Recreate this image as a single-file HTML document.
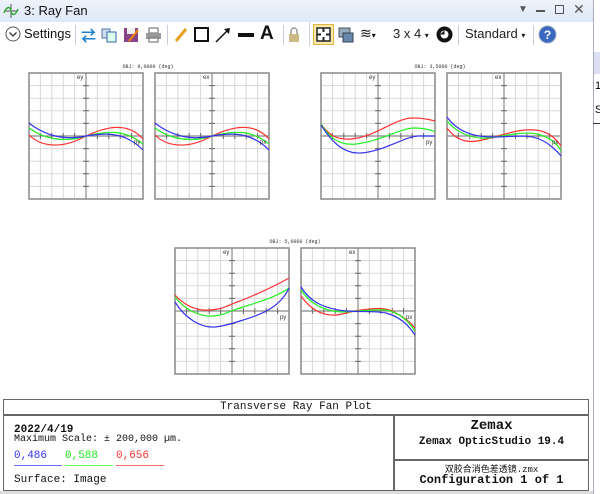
<!DOCTYPE html>
<html><head><meta charset="utf-8"><style>
*{margin:0;padding:0;box-sizing:border-box}
body{width:600px;height:494px;overflow:hidden;background:#fff;position:relative;font-family:"Liberation Sans","Noto Sans CJK SC",sans-serif}
.abs{position:absolute}
.mono{font-family:"Liberation Mono","Noto Sans CJK SC",monospace}
</style></head><body>
<!-- title bar -->
<div class="abs" style="left:0;top:0;width:593px;height:22px;background:linear-gradient(#eef3fb,#dde8f7);"></div>
<svg class="abs" style="left:3px;top:3px" width="16" height="16"><line x1="8" y1="1" x2="8" y2="15" stroke="#555"/><line x1="1" y1="8" x2="15" y2="8" stroke="#555"/><path d="M1,10 C4,3 7,3 8,8 C9,13 12,13 15,6" stroke="#3a3" fill="none" stroke-width="1.5"/></svg>
<div class="abs" style="left:24px;top:3px;font-size:13px;color:#111">3: Ray Fan</div>
<div class="abs" style="left:518px;top:4px;font-size:10px;color:#555">▼</div>
<div class="abs" style="left:536px;top:10px;width:9px;height:2px;background:#555"></div>
<div class="abs" style="left:555px;top:5px;width:9px;height:9px;border:1.5px solid #555"></div>
<div class="abs" style="left:573px;top:1px;font-size:14px;color:#555">✕</div>
<!-- right strip -->
<div class="abs" style="left:593px;top:0;width:7px;height:494px;background:#fff;border-left:1px solid #aab"></div>
<div class="abs" style="left:594px;top:52px;width:6px;height:22px;background:#dde0f5"></div>
<div class="abs" style="left:595px;top:80px;font-size:11px">1</div>
<div class="abs" style="left:595px;top:104px;font-size:11px">S</div>
<div class="abs" style="left:593px;top:123px;width:7px;height:1px;background:#333"></div>
<!-- toolbar -->
<div class="abs" style="left:0;top:22px;width:593px;height:26px;background:#fff"></div>
<svg class="abs" style="left:5px;top:26px" width="16" height="16"><circle cx="8" cy="8" r="7" fill="none" stroke="#555"/><path d="M4.5,6.5 L8,10 L11.5,6.5" stroke="#333" fill="none" stroke-width="1.3"/></svg>
<div class="abs" style="left:24px;top:26px;font-size:13px;color:#111">Settings</div>
<div class="abs" style="left:75px;top:25px;width:1px;height:20px;background:#ccd"></div>
<div class="abs" style="left:81px;top:25px;font-size:15px;color:#1a7fd0;font-weight:bold">⇄</div>
<svg class="abs" style="left:101px;top:27px" width="16" height="16"><rect x="1" y="2" width="8" height="9" fill="#cde" stroke="#57a"/><rect x="6" y="5" width="9" height="10" fill="#dfe" stroke="#36a"/></svg>
<svg class="abs" style="left:123px;top:27px" width="16" height="16"><rect x="1" y="1" width="14" height="14" fill="#848" /><rect x="4" y="1" width="8" height="6" fill="#eee"/><path d="M6,14 L15,3" stroke="#e80" stroke-width="2"/></svg>
<svg class="abs" style="left:145px;top:27px" width="17" height="16"><rect x="4" y="1" width="9" height="5" fill="#fff" stroke="#666"/><rect x="1" y="6" width="15" height="6" fill="#999"/><rect x="4" y="11" width="9" height="4" fill="#fff" stroke="#666"/></svg>
<div class="abs" style="left:167px;top:25px;width:1px;height:20px;background:#ccd"></div>
<svg class="abs" style="left:174px;top:27px" width="14" height="16"><path d="M2,14 L12,2" stroke="#e9a020" stroke-width="3"/></svg>
<div class="abs" style="left:194px;top:27px;width:15px;height:15px;border:2px solid #111"></div>
<svg class="abs" style="left:214px;top:26px" width="18" height="18"><path d="M2,16 L15,3" stroke="#111" stroke-width="1.5"/><path d="M10,3 L16,2 L15,8Z" fill="#111"/></svg>
<div class="abs" style="left:238px;top:33px;width:16px;height:4px;background:#111"></div>
<div class="abs" style="left:260px;top:23px;font-size:19px;font-weight:bold;color:#111">A</div>
<div class="abs" style="left:283px;top:25px;width:1px;height:20px;background:#ccd"></div>
<svg class="abs" style="left:288px;top:27px" width="12" height="16"><path d="M3,7 V4 A3,3 0 0 1 9,4 V7" stroke="#999" fill="none" stroke-width="1.5"/><rect x="1" y="7" width="10" height="8" fill="#cb8"/></svg>
<div class="abs" style="left:309px;top:22px;width:1px;height:24px;background:#ccd"></div>
<div class="abs" style="left:313px;top:24px;width:21px;height:21px;background:#fde9a8;border:1px solid #e2b340"></div>
<svg class="abs" style="left:316px;top:27px" width="15" height="15"><rect x="1" y="1" width="13" height="13" fill="#fff" stroke="#222" stroke-width="1.5"/><path d="M7.5,1V14M1,7.5H14" stroke="#222" stroke-width="2"/><rect x="5" y="5" width="5" height="5" fill="#fff"/></svg>
<svg class="abs" style="left:338px;top:27px" width="16" height="16"><rect x="1" y="1" width="11" height="9" fill="#9ab" stroke="#456"/><rect x="5" y="6" width="10" height="9" fill="#68a" stroke="#345"/></svg>
<div class="abs" style="left:360px;top:25px;font-size:14px;color:#111">≋<span style="font-size:8px">▾</span></div>
<div class="abs" style="left:393px;top:26px;font-size:13px;color:#222">3 x 4 <span style="font-size:8px">▾</span></div>
<svg class="abs" style="left:436px;top:26px" width="17" height="17"><circle cx="8.5" cy="8.5" r="8" fill="#111"/><circle cx="8.5" cy="8.5" r="4" fill="#fff"/><path d="M8.5,4.5 V8.5 H4" fill="#111"/></svg>
<div class="abs" style="left:458px;top:25px;width:1px;height:20px;background:#ccd"></div>
<div class="abs" style="left:465px;top:26px;font-size:13px;color:#222">Standard <span style="font-size:8px">▾</span></div>
<div class="abs" style="left:533px;top:25px;width:1px;height:20px;background:#ccd"></div>
<svg class="abs" style="left:538px;top:25px" width="19" height="19"><circle cx="9.5" cy="9.5" r="8.5" fill="#3a68c0" stroke="#9ab"/><text x="9.5" y="14" font-size="12" font-weight="bold" fill="#fff" text-anchor="middle" font-family="Liberation Sans">?</text></svg>

<!-- plots -->
<svg class="abs" style="left:0;top:48px" width="593" height="350" font-family="Liberation Sans" >
<defs>
<g id="grid">
<rect x="0" y="0" width="114" height="126" fill="#fff"/>
<g stroke="#d8d8d8" stroke-width="1">
<path d="M11.4,0V126M22.8,0V126M34.2,0V126M45.6,0V126M68.4,0V126M79.8,0V126M91.2,0V126M102.6,0V126"/>
<path d="M0,12.6H114M0,25.2H114M0,37.8H114M0,50.4H114M0,75.6H114M0,88.2H114M0,100.8H114M0,113.4H114"/>
</g>
<path d="M57,0V126M0,63H114" stroke="#888" stroke-width="1.2"/>
<g stroke="#666" stroke-width="1"><path d="M11.4,60V66M22.8,60V66M34.2,60V66M45.6,60V66M68.4,60V66M79.8,60V66M91.2,60V66M102.6,60V66M54,12.6H60M54,25.2H60M54,37.8H60M54,50.4H60M54,75.6H60M54,88.2H60M54,100.8H60M54,113.4H60"/></g>
<rect x="0" y="0" width="114" height="126" fill="none" stroke="#888" stroke-width="1.5"/>
</g>
</defs>
<g font-size="5" fill="#333" class="mono">
<text x="148" y="20" text-anchor="middle" font-family="Liberation Mono">OBJ: 0,0000 (deg)</text>
<text x="440" y="20" text-anchor="middle" font-family="Liberation Mono">OBJ: 3,5000 (deg)</text>
<text x="295" y="195" text-anchor="middle" font-family="Liberation Mono">OBJ: 5,0000 (deg)</text>
</g>
<g fill="none" stroke-width="1.2">
<!-- plot1 -->
<g transform="translate(29,25)"><use href="#grid"/>
<path d="M0,62 C10,72 30,78 57,63 C80,52 100,50 114,66" stroke="#f33"/>
<path d="M0,55 C15,66 35,70 57,63 C80,58 95,56 114,71" stroke="#2e2"/>
<path d="M0,50 C15,62 35,68 57,63 C75,60 95,58 114,77" stroke="#33e"/>
<text x="48" y="6" font-size="6" fill="#333" stroke="none">ey</text><text x="105" y="71" font-size="6" fill="#333" stroke="none">py</text></g>
<!-- plot2 -->
<g transform="translate(155,25)"><use href="#grid"/>
<path d="M0,62 C10,72 30,78 57,63 C80,52 100,50 114,66" stroke="#f33"/>
<path d="M0,55 C15,66 35,70 57,63 C80,58 95,56 114,71" stroke="#2e2"/>
<path d="M0,50 C15,62 35,68 57,63 C75,60 95,58 114,77" stroke="#33e"/>
<text x="48" y="6" font-size="6" fill="#333" stroke="none">ex</text><text x="105" y="71" font-size="6" fill="#333" stroke="none">px</text></g>
<!-- plot3 -->
<g transform="translate(321,25)"><use href="#grid"/>
<path d="M0,51 C8,62 15,67 30,66 C55,64 75,44 93,45 C103,45 110,47 114,48" stroke="#f33"/>
<path d="M0,51 C8,64 18,73 35,71 C60,68 80,55 93,55 C103,55 110,57 114,59" stroke="#2e2"/>
<path d="M0,52 C10,68 22,81 40,80 C65,78 85,62 100,63 C107,63 111,63 114,63" stroke="#33e"/>
<text x="48" y="6" font-size="6" fill="#333" stroke="none">ey</text><text x="105" y="71" font-size="6" fill="#333" stroke="none">py</text></g>
<!-- plot4 -->
<g transform="translate(447,25)"><use href="#grid"/>
<path d="M0,55 C8,66 18,70 30,68 C45,66 70,55 88,57 C100,58 108,64 114,73" stroke="#f33"/>
<path d="M0,48 C10,60 25,66 40,65 C60,63 75,58 90,61 C102,64 110,70 114,78" stroke="#2e2"/>
<path d="M0,44 C10,58 25,64 45,64 C65,64 80,61 92,66 C102,70 110,78 114,83" stroke="#33e"/>
<text x="48" y="6" font-size="6" fill="#333" stroke="none">ex</text><text x="105" y="71" font-size="6" fill="#333" stroke="none">px</text></g>
<!-- plot5 -->
<g transform="translate(175,200)"><use href="#grid"/>
<path d="M0,47 C10,58 22,63 35,62 C50,61 55,56 65,53 C85,45 100,38 114,30" stroke="#f33"/>
<path d="M0,49 C10,62 25,69 38,68 C50,67 52,64 62,61 C80,55 100,50 114,40" stroke="#2e2"/>
<path d="M0,54 C10,70 25,80 40,79 C50,78 55,76 65,73 C85,67 105,60 114,40" stroke="#33e"/>
<text x="48" y="6" font-size="6" fill="#333" stroke="none">ey</text><text x="105" y="71" font-size="6" fill="#333" stroke="none">py</text></g>
<!-- plot6 -->
<g transform="translate(301,200)"><use href="#grid"/>
<path d="M0,48 C10,62 22,68 35,67 C45,66 50,63 60,62 C75,60 85,59 95,65 C105,70 110,75 114,80" stroke="#f33"/>
<path d="M0,42 C10,57 25,63 40,64 C55,64 70,61 85,62 C100,65 108,74 114,83" stroke="#2e2"/>
<path d="M0,39 C10,55 25,61 45,63 C60,64 75,63 85,65 C100,69 108,78 114,87" stroke="#33e"/>
<text x="48" y="6" font-size="6" fill="#333" stroke="none">ex</text><text x="105" y="71" font-size="6" fill="#333" stroke="none">px</text></g>
</g>
</svg>

<!-- bottom frame -->
<div class="abs" style="left:3px;top:399px;width:586px;height:92px;border:1.5px solid #666;background:#fff"></div>
<div class="abs" style="left:3px;top:414px;width:586px;height:1.5px;background:#666"></div>
<div class="abs" style="left:393px;top:414px;width:1.5px;height:77px;background:#666"></div>
<div class="abs" style="left:393px;top:459px;width:196px;height:1.5px;background:#666"></div>
<div class="abs mono" style="left:3px;top:401px;width:586px;text-align:center;font-size:11px;color:#111">Transverse Ray Fan Plot</div>
<div class="abs mono" style="left:14px;top:424px;font-size:11px;font-weight:bold;color:#111">2022/4/19</div>
<div class="abs mono" style="left:14px;top:434px;font-size:10px;color:#111">Maximum Scale: ± 200,000 µm.</div>
<div class="abs mono" style="left:14px;top:450px;font-size:11px;color:#33f">0,486</div>
<div class="abs mono" style="left:65px;top:450px;font-size:11px;color:#2e2">0,588</div>
<div class="abs mono" style="left:116px;top:450px;font-size:11px;color:#f33">0,656</div>
<div class="abs" style="left:14px;top:465px;width:48px;height:1px;background:#66f"></div>
<div class="abs" style="left:65px;top:465px;width:48px;height:1px;background:#6f6"></div>
<div class="abs" style="left:116px;top:465px;width:48px;height:1px;background:#f66"></div>
<div class="abs mono" style="left:14px;top:474px;font-size:11px;color:#111">Surface: Image</div>
<div class="abs mono" style="left:394px;top:418px;width:195px;text-align:center;font-size:14px;font-weight:bold;color:#111">Zemax</div>
<div class="abs mono" style="left:394px;top:436px;width:195px;text-align:center;font-size:11px;font-weight:bold;color:#111">Zemax OpticStudio 19.4</div>
<div class="abs mono" style="left:394px;top:462px;width:195px;text-align:center;font-size:9px;color:#111">双胶合消色差透镜.zmx</div>
<div class="abs mono" style="left:394px;top:473px;width:195px;text-align:center;font-size:12px;font-weight:bold;color:#111">Configuration 1 of 1</div>
<div class="abs" style="left:0;top:491px;width:593px;height:3px;background:#ddd"></div>
</body></html>
